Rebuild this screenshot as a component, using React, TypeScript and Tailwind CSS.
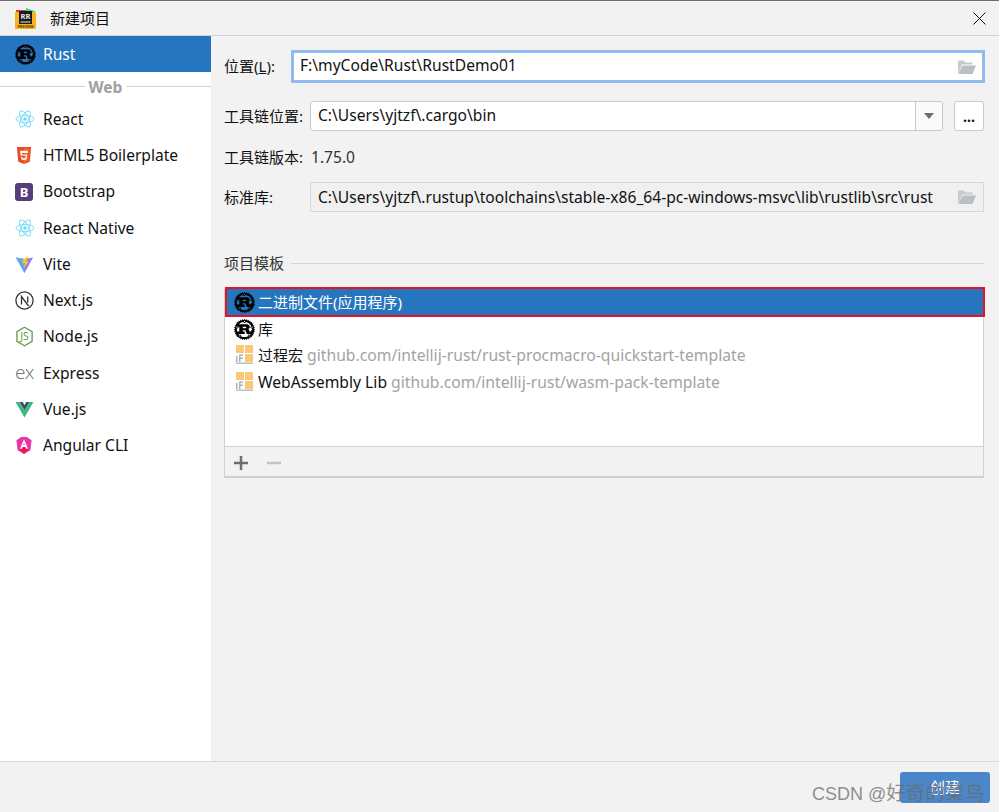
import React from 'react';
import { SiRust } from 'react-icons/si';
import { Plus, Minus } from 'lucide-react';

const FONT = '"Noto Sans", "Noto Sans CJK SC", sans-serif';

function RustIcon() {
    return <SiRust size={21} className="text-black shrink-0" />;
}

function ReactIcon() {
    return (
        <svg width="20" height="18" viewBox="-11 -10 22 20" fill="none" stroke="#7fdcfb" strokeWidth="1.1">
            <circle r="2" fill="#61dafb" stroke="none" />
            <ellipse rx="10" ry="4" />
            <ellipse rx="10" ry="4" transform="rotate(60)" />
            <ellipse rx="10" ry="4" transform="rotate(120)" />
        </svg>
    );
}

function Html5Icon() {
    return (
        <svg width="18" height="19" viewBox="0 0 18 20">
            <path d="M1.500 1h15l-1.400 15.500L9 19l-6.100-2.500z" fill="#e44d26" />
            <path d="M9 2.300h6.100l-1.100 13.300L9 17.600z" fill="#f16529" />
            <path d="M13 5H5l.4 5h5.400l-.2 2.600-1.600.5-1.600-.5-.1-1.200H6l.2 2.600 2.800.9 2.800-.9.400-5H7l-.1-1.700h6z" fill="#fff" />
        </svg>
    );
}

function BootstrapIcon() {
    return (
        <svg width="18" height="18" viewBox="0 0 18 18">
            <rect width="18" height="18" rx="3" fill="#563d7c" />
            <text x="9" y="13.800" textAnchor="middle" fontSize="13" fontWeight="700" fill="#fff" style={{ fontFamily: FONT }}>B</text>
        </svg>
    );
}

function ViteIcon() {
    return (
        <svg width="19" height="19" viewBox="0 0 20 20">
            <path d="M1 2.500l9 1.600 9-1.600L10 19z" fill="#8f7cf8" />
            <path d="M1 2.500l9 1.600V19z" fill="#5aa9f5" />
            <path d="M8 5.500L13.600 1l-1.400 5.500h2.400L9.400 14l1-5.200H8z" fill="#ffc517" />
        </svg>
    );
}

function NextIcon() {
    return (
        <svg width="19" height="19" viewBox="0 0 19 19" fill="none" stroke="#333" strokeWidth="1.300">
            <circle cx="9.500" cy="9.500" r="8.600" />
            <path d="M6.500 13.500V5.500L13.500 15M12.700 5.500v6" />
        </svg>
    );
}

function NodeIcon() {
    return (
        <svg width="19" height="21" viewBox="0 0 20 22" fill="none">
            <path d="M10 1.300l8 4.600v10.200l-8 4.600-8-4.600V5.900z" stroke="#5fa04e" strokeWidth="1.400" />
            <text x="10" y="15.200" textAnchor="middle" fontSize="11" fill="#5fa04e" style={{ fontFamily: FONT }}>JS</text>
        </svg>
    );
}

function VueIcon() {
    return (
        <svg width="19" height="17" viewBox="0 0 20 18">
            <path d="M0.500 1h4.500l5 8.500L15 1h4.500L10 17.500z" fill="#41b883" />
            <path d="M5 1h3l2 3.500L12 1h3l-5 8.500z" fill="#35495e" />
        </svg>
    );
}

function AngularIcon() {
    return (
        <svg width="18" height="19" viewBox="0 0 18 20">
            <path d="M6 1L1 4.500l1.300 10.500L9 19l6.700-4L17 4.500 12 1z" fill="#e535ab" />
            <path d="M9 4L4.500 14.500 9 19l4.500-4.500z" fill="#f0174f" />
            <path d="M9 3.500L4.800 13.500h1.900l.8-2h3l.8 2h1.900zM8.100 9.800L9 7.500l.9 2.300z" fill="#fff" />
        </svg>
    );
}

function FolderIcon() {
    return (
        <svg width="19" height="16" viewBox="0 0 19 16" className="shrink-0">
            <path d="M1 14V2.500L1.800 1.500h5l1.500 2h7.200v2H5L1.800 14z" fill="#c4cacd" />
            <path d="M5.500 6.500H19L15.500 15H1.500z" fill="#b9bfc3" />
        </svg>
    );
}

function TemplateIcon() {
    return (
        <svg width="19" height="21" viewBox="0 0 19 21" className="shrink-0">
            <rect x="1" y="0" width="8" height="8" fill="#f9c879" />
            <rect x="10" y="0" width="8" height="8" fill="#f9c879" />
            <rect x="10" y="9" width="8" height="8" fill="#f9c879" />
            <path d="M1 17.500h17V19H1z" fill="#b9bfc3" />
            <path d="M1 11h1.500v6H1zM4 9.500h4v1.500H5.500v1.500H8V14H5.500v3H4z" fill="#a9b3ba" />
        </svg>
    );
}

function RRLogo() {
    return (
        <svg width="21" height="21" viewBox="0 0 21 21">
            <path d="M1 2h11l-1 6H1z" fill="#f0353e" />
            <path d="M11 0l9 3-1 7-8-4z" fill="#3ddc84" />
            <rect x="0" y="4" width="21" height="17" rx="1" fill="#f9b31c" />
            <rect x="4" y="3" width="13" height="13" fill="#1c1c1c" />
            <text x="10.500" y="11" textAnchor="middle" fontSize="7.500" fontWeight="700" fill="#e8e8e8" style={{ fontFamily: FONT }}>RR</text>
            <path d="M5.500 13.500h10v1h-10z" fill="#e8e8e8" />
            <text x="10.500" y="20" textAnchor="middle" fontSize="3.600" fontWeight="700" fill="#4a3200" style={{ fontFamily: FONT }}>PREVIEW</text>
        </svg>
    );
}

const items: { name: string; icon: React.ReactNode }[] = [
    { name: 'React', icon: <ReactIcon /> },
    { name: 'HTML5 Boilerplate', icon: <Html5Icon /> },
    { name: 'Bootstrap', icon: <BootstrapIcon /> },
    { name: 'React Native', icon: <ReactIcon /> },
    { name: 'Vite', icon: <ViteIcon /> },
    { name: 'Next.js', icon: <NextIcon /> },
    { name: 'Node.js', icon: <NodeIcon /> },
    { name: 'Express', icon: <span className="text-[19px] font-light tracking-tight leading-none text-[#777]">ex</span> },
    { name: 'Vue.js', icon: <VueIcon /> },
    { name: 'Angular CLI', icon: <AngularIcon /> },
];

export default function App() {
    return (
        <main className="relative w-[999px] h-[812px] flex flex-col overflow-hidden bg-[#f2f2f2] border-t border-[#6d6d6d] text-[15.6px] text-[#111]" style={{ fontFamily: FONT }}>
            {/* Title bar */}
            <header className="h-[35px] shrink-0 flex items-center pl-[15px] pr-[13px] border-b border-[#d4d4d4]">
                <RRLogo />
                <span className="ml-[14px] text-[15px]">新建项目</span>
                <svg width="13" height="13" viewBox="0 0 13 13" className="ml-auto" stroke="#111" strokeWidth="1">
                    <path d="M0.500 0.500l12 12M12.500 0.500l-12 12" />
                </svg>
            </header>

            <div className="flex-1 flex min-h-0">
                {/* Sidebar */}
                <aside className="w-[211px] shrink-0 bg-white">
                    <div className="h-[36px] flex items-center pl-[15px] gap-[7px] bg-[#2675bf] text-white">
                        <RustIcon />
                        <span className="pt-[2px]">Rust</span>
                    </div>
                    <div className="h-[29px] flex items-center gap-[4px]">
                        <div className="flex-1 h-px bg-[#d4d4d4]" />
                        <span className="pt-[2px] font-bold text-[#a0a0a0]">Web</span>
                        <div className="flex-1 h-px bg-[#d4d4d4]" />
                    </div>
                    {items.map((item) => (
                        <div key={item.name} className="h-[36.25px] flex items-center">
                            <div className="w-[43px] pl-[15px] flex items-center">{item.icon}</div>
                            <span className="pt-px">{item.name}</span>
                        </div>
                    ))}
                </aside>

                {/* Form */}
                <section className="flex-1 min-w-0 pl-[13px] pr-[15px] pt-[14px]">
                    <div className="flex items-center h-[33px] -mr-px">
                        <span className="w-[67px] shrink-0 text-[15px]">位置(<u>L</u>):</span>
                        <div className="flex-1 h-full flex items-center justify-between bg-white border-[3px] border-[#8fbbee] pl-[6px] pr-[6px]">
                            <span className="pb-[2px]">F:\myCode\Rust\RustDemo01</span>
                            <FolderIcon />
                        </div>
                    </div>

                    <div className="flex items-center h-[30px] mt-[18px]">
                        <span className="w-[86px] shrink-0 text-[15px]">工具链位置:</span>
                        <div className="w-[633px] h-full flex items-center bg-white border border-[#c9c9c9] rounded-[3px] pl-[7px]">
                            <span className="flex-1 pb-px">C:\Users\yjtzf\.cargo\bin</span>
                            <div className="w-[27px] h-full flex items-center justify-center bg-[#fafafa] border-l border-[#c9c9c9] rounded-r-[3px]">
                                <div className="w-0 h-0 border-l-[5px] border-r-[5px] border-t-[6px] border-l-transparent border-r-transparent border-t-[#6e6e6e]" />
                            </div>
                        </div>
                        <div className="w-[30px] h-full ml-[11px] flex items-center justify-center bg-white border border-[#c9c9c9] rounded-[3px] text-[14px] font-bold">...</div>
                    </div>

                    <div className="flex items-center h-[20px] mt-[16px]">
                        <span className="w-[87px] shrink-0 text-[15px]">工具链版本:</span>
                        <span className="pt-[2px] text-[#333]">1.75.0</span>
                    </div>

                    <div className="flex items-center h-[30px] mt-[15px]">
                        <span className="w-[86px] shrink-0 text-[15px]">标准库:</span>
                        <div className="flex-1 h-full flex items-center justify-between bg-[#f0f0f0] border border-[#d6d6d6] pl-[7px] pr-[7px]">
                            <span className="pt-[2px] whitespace-nowrap">C:\Users\yjtzf\.rustup\toolchains\stable-x86_64-pc-windows-msvc\lib\rustlib\src\rust</span>
                            <FolderIcon />
                        </div>
                    </div>

                    <div className="flex items-center h-[20px] mt-[41px]">
                        <span className="text-[15px] text-[#333]">项目模板</span>
                        <div className="flex-1 h-px ml-[7px] bg-[#d4d4d4]" />
                    </div>

                    {/* Template list */}
                    <div className="mt-[16px] h-[189px] flex flex-col border-l border-r border-b-2 border-t border-[#d0d0d0] bg-white text-[15.7px]">
                        <div className="h-[26px] -mt-px ml-[2px] flex items-center gap-[3px] pl-[7px] bg-[#2675bf] text-white outline-2 outline-[#e81123]">
                            <RustIcon />
                            <span className="pt-px text-[15px]">二进制文件(应用程序)</span>
                        </div>
                        <div className="h-[26px] mt-px flex items-center gap-[3px] pl-[9px]">
                            <RustIcon />
                            <span className="text-[15px]">库</span>
                        </div>
                        <div className="h-[27px] flex items-center gap-[4px] pl-[10px]">
                            <TemplateIcon />
                            <span><span className="text-[15px]">过程宏</span> <span className="text-[#a3a3a3]">github.com/intellij-rust/rust-procmacro-quickstart-template</span></span>
                        </div>
                        <div className="h-[26px] flex items-center gap-[4px] pl-[10px]">
                            <TemplateIcon />
                            <span className="pt-px">WebAssembly Lib <span className="text-[#a3a3a3]">github.com/intellij-rust/wasm-pack-template</span></span>
                        </div>
                        <div className="mt-auto h-[30px] flex items-center pl-[4px] pt-[3px] gap-[9px] bg-[#f2f2f2] border-t border-[#d0d0d0]">
                            <Plus size={24} strokeWidth={2.5} strokeLinecap="butt" className="text-[#6e6e6e]" />
                            <Minus size={24} strokeWidth={2.5} strokeLinecap="butt" className="text-[#c4c4c4]" />
                        </div>
                    </div>
                </section>
            </div>

            {/* Footer */}
            <footer className="h-[51px] shrink-0 flex items-center justify-end pr-[9px] border-t border-[#d9d9d9]">
                <button className="w-[90px] h-[31px] rounded-[3px] bg-[#4a86c8] text-white text-[15px] mt-[1px]">创建</button>
            </footer>

            {/* CSDN watermark over the button */}
            <span className="absolute left-[812px] top-[780px] text-[18px] leading-[24px] text-[#6b6b6b]/75 whitespace-nowrap" style={{ fontFamily: '"Liberation Sans", "Noto Sans CJK SC", sans-serif' }}>
                CSDN @<span className="text-[19.6px]">好奇的菜鸟</span>
            </span>
        </main>
    );
}
